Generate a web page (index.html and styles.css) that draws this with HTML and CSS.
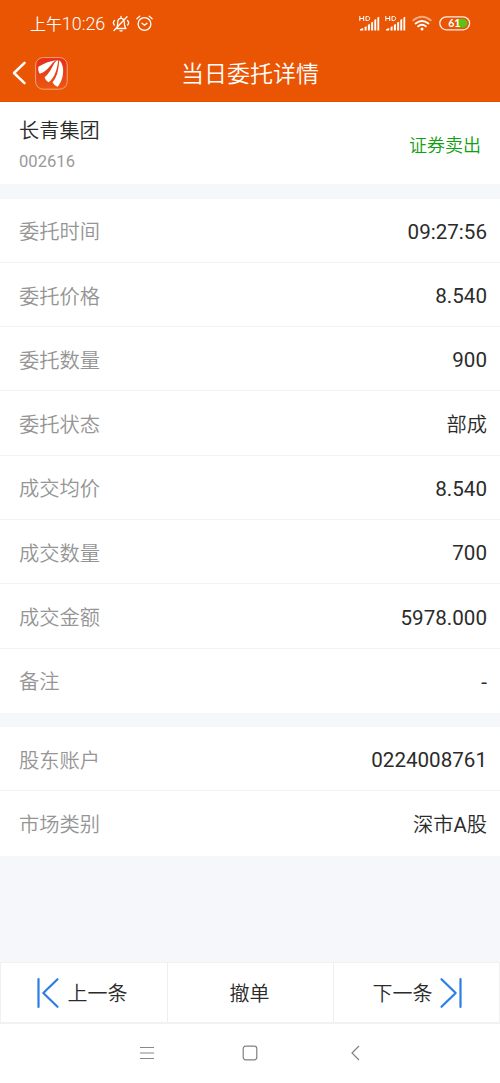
FILE: index.html
```html
<!DOCTYPE html>
<html lang="zh-CN">
<head>
<meta charset="utf-8">
<meta name="viewport" content="width=device-width, initial-scale=1">
<title>当日委托详情</title>
<link rel="stylesheet" href="styles.css">
</head>
<body>
<div class="app">
  <header class="top">
    <div class="status">
      <span class="clock"><span class="period">上午</span>10:26</span>
      <svg class="mute" width="18" height="18" viewBox="0 0 18 18" fill="none" stroke="#fff" stroke-width="1.300" stroke-linecap="round"><path d="M4.500 13.500h9.500M5 12c.7-1.200.7-2.200.7-4.500 0-2.600 1.300-4.200 3.300-4.200s3.300 1.600 3.300 4.200c0 2.300 0 3.600 1.200 5.200M8 15.800h2.200M2.500 5.500C1 7 1 8.500 2.300 10M15.500 5.500c1.500 1.500 1.500 3 .2 4.500M2 15.500 15 1.800M9 1.500v1.500"/></svg>
      <svg class="alarm" width="17" height="17" viewBox="0 0 17 17" fill="none" stroke="#fff" stroke-width="1.300" stroke-linecap="round" stroke-linejoin="round"><circle cx="8.500" cy="9" r="6.400"/><path d="M.9 3.800 3.700 1.300M16.100 3.800l-2.800-2.500M6 8.300l2.500 2L11 8.300"/></svg>
      <svg class="signals" width="48" height="18" viewBox="0 0 48 18">
        <g id="sim"><path fill="#fff" d="M1 15.500v-1.300l3.200-1.200v2.500zM5.600 15.500v-3.600l2-.7v4.300zM8.900 15.500V9.800l2-.8v6.500zM12.100 15.500V7.500l2-.8v8.800zM15.300 15.500V4.800l1.900-.8v11.500zM18.400 15.500V2.500l1.800-.8v13.800z"/><path d="M.8 1v5M4.700 1v5M.8 3.500h3.900M7 1.500v4h1.600c2.800 0 2.800-4 0-4z" fill="none" stroke="#fff"/></g>
        <use href="#sim" x="26"/>
      </svg>
      <svg class="wifi" width="20" height="17" viewBox="0 0 20 17" fill="none" stroke="#fff" stroke-width="1.900" stroke-linecap="round"><path opacity=".5" d="M1.300 5.300q8.700-7 17.400 0"/><path d="M3.600 8.400q6.400-5 12.800 0M6.200 11.300q3.800-3 7.600 0"/><circle cx="10" cy="14" r="1.500" fill="#fff" stroke="none"/></svg>
      <svg class="battery" width="32" height="15" viewBox="0 0 32 15"><path d="M18 3h6a4.300 4.300 0 0 1 4.300 4.300 4.300 4.300 0 0 1-4.300 4.300h-6z" fill="#5bc216"/><rect x=".8" y=".8" width="29.800" height="13" rx="6.500" fill="none" stroke="#fff" stroke-width="1.300" opacity=".9"/><text class="charge" x="15.300" y="11.300" text-anchor="middle">61</text></svg>
    </div>
    <div class="nav">
      <svg class="back" width="16" height="26" viewBox="0 0 16 26" fill="none" stroke="#fff" stroke-width="2.500" stroke-linecap="round" stroke-linejoin="round"><path d="M13.500 2.800 3 13l10.500 10.200"/></svg>
      <svg class="logo" width="33" height="33" viewBox="0 0 33 33"><defs><linearGradient id="tile" x1="0" y1="0" x2="0" y2="1"><stop offset="0" stop-color="#e62d1b"/><stop offset="1" stop-color="#ea590e"/></linearGradient></defs><rect x=".6" y=".6" width="31.600" height="31.600" rx="7.500" fill="url(#tile)" stroke="#f7a077" stroke-width="1"/><path fill="#fff" d="M3.400 9.800C9 6.300 14.500 4.200 20.800 3.200 15.500 6.500 14 13.500 4.800 16.800 3.300 15 3 12.500 3.400 9.800ZM22 3.200C17.500 6.500 16.500 15 9.500 20.200 10.500 22.800 12 24.500 13.800 25.300 20 20 22 12.500 23.300 3.500ZM24.300 3.200C23.500 10 23.300 18.500 17.500 25.300 18.700 27.500 20.300 29 22.800 29.700 27.500 23.500 28.700 17 27.900 10.500 27.200 7 26.200 4.800 24.300 3.200Z"/></svg>
      <h1 class="title">当日委托详情</h1>
    </div>
  </header>
  <section class="stock">
    <div><div class="name">长青集团</div><div class="code">002616</div></div>
    <div class="side">证券卖出</div>
  </section>
  <section class="list">
    <div class="row"><span class="label">委托时间</span><span class="value">09:27:56</span></div>
    <div class="row"><span class="label">委托价格</span><span class="value">8.540</span></div>
    <div class="row"><span class="label">委托数量</span><span class="value">900</span></div>
    <div class="row"><span class="label">委托状态</span><span class="value cjk">部成</span></div>
    <div class="row"><span class="label">成交均价</span><span class="value">8.540</span></div>
    <div class="row"><span class="label">成交数量</span><span class="value">700</span></div>
    <div class="row"><span class="label">成交金额</span><span class="value">5978.000</span></div>
    <div class="row"><span class="label">备注</span><span class="value">-</span></div>
  </section>
  <section class="list">
    <div class="row"><span class="label">股东账户</span><span class="value">0224008761</span></div>
    <div class="row"><span class="label">市场类别</span><span class="value cjk">深市<span class="latin">A</span>股</span></div>
  </section>
  <div class="actions">
    <div class="action prev"><svg width="24" height="32" viewBox="0 0 24 32" fill="none" stroke="#2b7ee5" stroke-width="2.200" stroke-linecap="round" stroke-linejoin="round"><path d="M2.500 2v28M21.500 2.200 7.300 16l14.200 13.800"/></svg><span>上一条</span></div>
    <div class="action cancel"><span>撤单</span></div>
    <div class="action next"><span>下一条</span><svg width="24" height="32" viewBox="0 0 24 32" fill="none" stroke="#2b7ee5" stroke-width="2.200" stroke-linecap="round" stroke-linejoin="round"><path d="M21.500 2v28M2.500 2.200 16.700 16 2.500 29.800"/></svg></div>
  </div>
  <div class="system">
    <svg width="16" height="16" viewBox="0 0 16 16" stroke="#888" stroke-width="1.200"><path d="M1 2.500h14M1 8h14M1 13.500h14"/></svg>
    <svg width="16" height="16" viewBox="0 0 16 16" fill="none" stroke="#808080" stroke-width="1.200"><rect x="1.200" y="1.200" width="13.600" height="13.600" rx="2.500"/></svg>
    <svg width="16" height="16" viewBox="0 0 16 16" fill="none" stroke="#808080" stroke-width="1.200"><path d="M12 1 5 8l7 7"/></svg>
  </div>
</div>
</body>
</html>
```

FILE: styles.css
```css
* { box-sizing: border-box; }
body {
  margin: 0;
  background: #f5f7fa;
  color: #2b2b2b;
  font-family: Roboto, "Noto Sans CJK SC DemiLight", "Noto Sans CJK SC", sans-serif;
  font-weight: 350;
}
svg { display: block; flex: none; }
.app { display: flex; flex-direction: column; height: 1083px; overflow: hidden; }
.top { height: 102px; flex: none; background: #ea5504; border-bottom: 1px solid #ee4b00; color: #fff; }
.status { display: flex; align-items: center; height: 47px; padding: 0 29px 0 30px; }
.clock { width: 82px; padding-top: 2px; font-size: 17.900px; line-height: 24px; white-space: nowrap; }
.period { font-size: 15.900px; }
.alarm { margin-left: 6px; }
.signals { margin-left: auto; }
.wifi { margin-left: 5px; }
.battery { margin-left: 7px; }
.charge { fill: #fff; font: 700 10.500px Lato, sans-serif; }
.nav { display: grid; grid-template-columns: 24px 33px 1fr 68px; align-items: center; height: 52px; padding: 0 0 0 11px; }
.title { justify-self: center; margin: 0; padding-top: 4px; font-size: 23px; font-weight: 350; line-height: 32px; }
.stock { display: flex; justify-content: space-between; align-items: center; height: 82px; flex: none; padding: 3px 19px 0; background: #fff; }
.name { font-size: 20.200px; line-height: 30px; }
.code { margin-top: 4px; color: #999; font-size: 16.600px; font-weight: 400; line-height: 24px; }
.side { padding-top: 2px; color: #10a010; font-size: 18px; line-height: 28px; }
.list { flex: none; margin-top: 14.600px; background: #fff; }
.list + .list { margin-top: 14px; }
.row { display: flex; align-items: center; justify-content: space-between; height: 64.300px; padding: 2px 13px 0 19px; border-bottom: 1px solid #f2f3f4; font-size: 20.300px; line-height: 30px; }
.row:last-child { border-bottom-color: transparent; }
.label { padding-top: 2px; color: #959595; }
.value { padding-top: 1px; font-size: 20.600px; font-weight: 400; }
.cjk { padding-top: 2px; font-size: 20.300px; font-weight: 350; }
.latin { font-weight: 400; }
.actions { display: grid; grid-template-columns: 1fr 1fr 1fr; height: 62px; margin-top: auto; flex: none; background: #fff; border: 1px solid #f1f1f2; border-bottom-width: 2px; font-size: 20px; line-height: 30px; }
.action { display: flex; align-items: center; justify-content: center; gap: 8px; }
.action span { padding-top: 2px; }
.prev { padding-right: 5px; }
.cancel { padding-right: 2px; }
.next { gap: 6px; padding-left: 2px; }
.action + .action { border-left: 1px solid #eeeeef; }
.system { display: grid; grid-template-columns: 103px 105px 16px; justify-content: center; height: 59px; flex: none; padding: 21px 0 0 2px; background: #fff; }
```
